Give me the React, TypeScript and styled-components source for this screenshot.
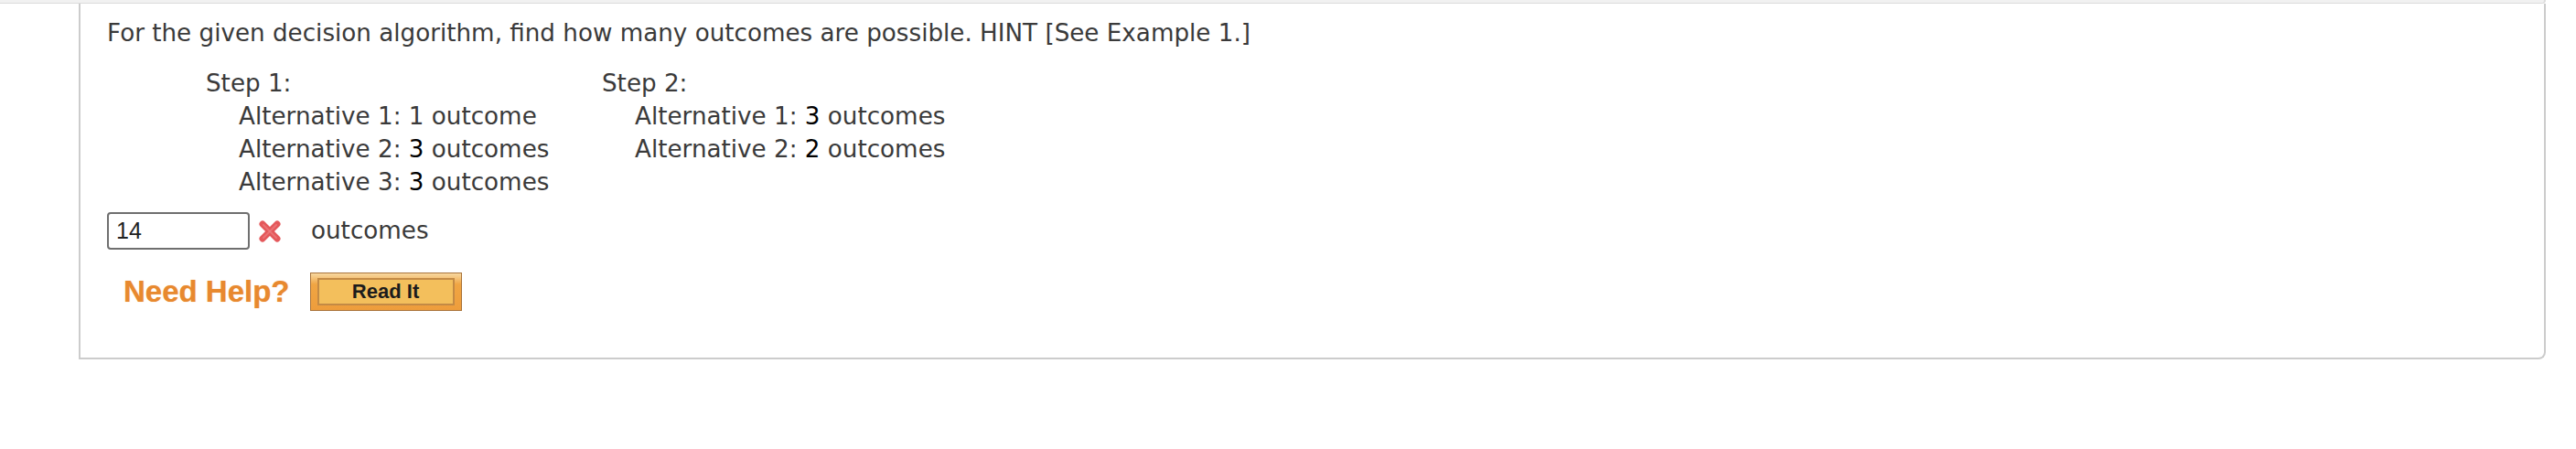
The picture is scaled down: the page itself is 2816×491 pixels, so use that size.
import React from 'react'
import styled, { createGlobalStyle } from 'styled-components'

const GlobalStyle = createGlobalStyle`
  html, body {
    margin: 0;
    padding: 0;
    background: #fff;
  }
  body {
    font-family: "DejaVu Sans", Verdana, sans-serif;
  }
`

type Alt = { label: string; count: number; unit: string; dark?: boolean }

const step1: Alt[] = [
  { label: 'Alternative 1:', count: 1, unit: 'outcome' },
  { label: 'Alternative 2:', count: 3, unit: 'outcomes', dark: true },
  { label: 'Alternative 3:', count: 3, unit: 'outcomes', dark: true },
]

const step2: Alt[] = [
  { label: 'Alternative 1:', count: 3, unit: 'outcomes', dark: true },
  { label: 'Alternative 2:', count: 2, unit: 'outcomes', dark: true },
]

const CrossIcon = () => (
  <svg width="26" height="26" viewBox="0 0 26 26">
    <g strokeLinecap="round">
      <line x1="5" y1="5" x2="21" y2="21" stroke="#e4585b" strokeWidth="7" />
      <line x1="21" y1="5" x2="5" y2="21" stroke="#e4585b" strokeWidth="7" />
      <line x1="6" y1="6" x2="20" y2="20" stroke="#ef8486" strokeWidth="2" opacity="0.6" />
      <line x1="20" y1="6" x2="6" y2="20" stroke="#ef8486" strokeWidth="2" opacity="0.6" />
    </g>
  </svg>
)

const StepColumn = ({ title, alts }: { title: string; alts: Alt[] }) => (
  <Column>
    <Line>{title}</Line>
    {alts.map((a, i) => (
      <AltLine key={i}>
        {a.label} <Num $dark={a.dark}>{a.count}</Num> {a.unit}
      </AltLine>
    ))}
  </Column>
)

const App = () => {
  return (
    <>
      <GlobalStyle />
      <Page>
        <PrevEdge />
        <Card>
          <Question>
            For the given decision algorithm, find how many outcomes are possible. HINT [See Example 1.]
          </Question>
          <Steps>
            <StepColumn title="Step 1:" alts={step1} />
            <StepColumn title="Step 2:" alts={step2} />
          </Steps>
          <AnswerRow>
            <AnswerInput defaultValue="14" />
            <Mark>
              <CrossIcon />
            </Mark>
            <Unit>outcomes</Unit>
          </AnswerRow>
          <HelpRow>
            <NeedHelp>Need Help?</NeedHelp>
            <ReadButton>
              <ReadInner>Read It</ReadInner>
            </ReadButton>
          </HelpRow>
        </Card>
      </Page>
    </>
  )
}

export default App

const Page = styled.div`
  width: 2816px;
  height: 491px;
  display: flex;
  flex-direction: column;
`

const PrevEdge = styled.div`
  width: 2783px;
  height: 4px;
  box-sizing: border-box;
  background: #f1f1f1;
  border-bottom: 1px solid #dcdcdc;
  border-right: 2px solid #dcdcdc;
  border-bottom-right-radius: 4px;
`

const Card = styled.div`
  margin-left: 86px;
  width: 2697px;
  height: 389px;
  box-sizing: border-box;
  border: 2px solid #cccccc;
  border-top: none;
  border-bottom-right-radius: 8px;
  padding: 14px 0 0 29px;
  color: #3a3a3a;
  font-size: 26.2px;
  line-height: 36px;
`

const Question = styled.div`
  white-space: nowrap;
`

const Steps = styled.div`
  display: grid;
  grid-template-columns: 433px auto;
  margin: 19px 0 0 108px;
  width: max-content;
`

const Column = styled.div`
  display: flex;
  flex-direction: column;
`

const Line = styled.div`
  white-space: nowrap;
`

const AltLine = styled(Line)`
  padding-left: 36px;
`

const Num = styled.span<{ $dark?: boolean }>`
  color: ${(p) => (p.$dark ? '#000' : 'inherit')};
`

const AnswerRow = styled.div`
  display: flex;
  align-items: center;
  margin-top: 15px;
  height: 41px;
`

const AnswerInput = styled.input`
  width: 156px;
  height: 41px;
  box-sizing: border-box;
  border: 2px solid #6f6f6f;
  border-radius: 4px;
  padding: 0 0 0 8px;
  font-family: "Liberation Sans", Arial, sans-serif;
  font-size: 25px;
  color: #222;
  outline: none;
  background: #fff;
`

const Mark = styled.span`
  display: flex;
  margin-left: 9px;
`

const Unit = styled.span`
  margin-left: 32px;
  margin-top: -2px;
`

const HelpRow = styled.div`
  display: flex;
  align-items: center;
  margin-top: 25px;
  padding-left: 18px;
`

const NeedHelp = styled.span`
  font-family: "Liberation Sans", Arial, sans-serif;
  font-weight: bold;
  font-size: 33px;
  line-height: 40px;
  color: #e8892f;
  margin-right: 22px;
  text-shadow: 0 0 1px rgba(232, 137, 47, 0.6);
`

const ReadButton = styled.button`
  width: 166px;
  height: 42px;
  box-sizing: border-box;
  padding: 5px 7px;
  border: 1px solid #a8733a;
  background: linear-gradient(#f8d8a0 0%, #f0a543 30%, #ee9d3c 100%);
  display: flex;
  cursor: pointer;
`

const ReadInner = styled.span`
  flex: 1;
  display: flex;
  align-items: center;
  justify-content: center;
  border: 2px solid #c38a45;
  background: #f3bf5c;
  font-family: "Liberation Sans", Arial, sans-serif;
  font-weight: bold;
  font-size: 22px;
  color: #1c1c1c;
`
